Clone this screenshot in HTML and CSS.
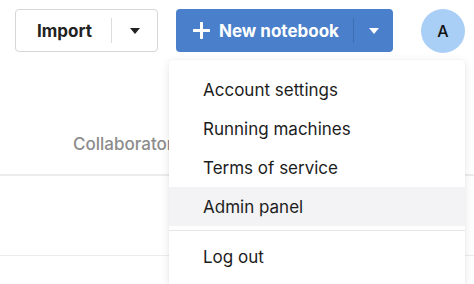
FILE: index.html
```html
<!DOCTYPE html>
<html>
<head>
<meta charset="utf-8">
<link rel="stylesheet" href="styles.css">
</head>
<body>
<div class="page">
  <header class="toolbar">
    <div class="btn btn-outline">
      <span class="btn-label">Import</span>
      <span class="btn-sep"></span>
      <span class="btn-caret"><svg width="10" height="6" viewBox="0 0 10 6"><path d="M0 0h10L5 6z" fill="#222"/></svg></span>
    </div>
    <div class="btn btn-primary">
      <svg class="plus" width="17" height="17" viewBox="0 0 17 17"><path d="M8.5 1v15M1 8.5h15" stroke="#fff" stroke-width="3" stroke-linecap="round"/></svg>
      <span class="btn-label">New notebook</span>
      <span class="btn-sep"></span>
      <span class="btn-caret"><svg width="10" height="6" viewBox="0 0 10 6"><path d="M0 0h10L5 6z" fill="#fff"/></svg></span>
    </div>
    <div class="avatar">A</div>
  </header>
  <section class="table">
    <div class="table-head">
      <span class="col-title">Collaborators</span>
    </div>
    <div class="table-row"></div>
  </section>
  <nav class="menu">
    <div class="menu-item">Account settings</div>
    <div class="menu-item">Running machines</div>
    <div class="menu-item">Terms of service</div>
    <div class="menu-item active">Admin panel</div>
    <div class="menu-divider"></div>
    <div class="menu-item">Log out</div>
  </nav>
</div>
</body>
</html>
```
FILE: styles.css
```css
* { box-sizing: border-box; }
html, body { margin: 0; padding: 0; background: #fff; }
body { font-family: Inter, "Liberation Sans", sans-serif; color: #1f1f1f; }
.page { position: relative; width: 474px; height: 284px; overflow: hidden; }

.toolbar {
  display: flex;
  align-items: center;
  padding: 9px 0 0 15px;
  height: 52px;
}
.btn {
  display: flex;
  align-items: center;
  height: 43px;
  border-radius: 4px;
}
.btn-outline {
  width: 143px;
  border: 1px solid #d6d6d6;
  padding-left: 21px;
  background: #fff;
}
.btn-outline .btn-label { font-weight: 700; font-size: 17px; color: #222; width: 74px; }
.btn-sep { width: 1px; height: 25px; background: #d4d4d4; }
.btn-outline .btn-sep { background: #dcdcdc; }
.btn-caret { flex: 1; display: flex; justify-content: center; align-items: center; }
.btn-caret svg { display: block; }

.btn-primary {
  margin-left: 18px;
  width: 217px;
  background: #4a7fcb;
  padding-left: 17px;
  color: #fff;
}
.plus { display: block; margin-right: 9px; }
.btn-primary .btn-label { font-weight: 700; font-size: 17px; width: 134px; }
.btn-primary .btn-sep { background: #3e6fb3; }

.avatar {
  margin-left: 28px;
  width: 44px;
  height: 44px;
  border-radius: 50%;
  background: #a9cff6;
  display: flex;
  align-items: center;
  justify-content: center;
  font-size: 16px;
  font-weight: 500;
  color: #111;
}

.table { margin-top: 72px; }
.table-head {
  height: 52px;
  border-bottom: 2px solid #ececec;
  padding-left: 73px;
  padding-top: 10px;
}
.col-title { font-size: 17px; font-weight: 500; color: #8c8c8c; white-space: nowrap; }
.table-row { height: 80px; border-bottom: 1px solid #ececec; }

.menu {
  position: absolute;
  left: 169px;
  top: 60px;
  width: 296px;
  background: #fff;
  border-radius: 4px;
  box-shadow: 0 2px 10px rgba(0,0,0,0.10), 0 0 2px rgba(0,0,0,0.06);
  padding-top: 10px;
  padding-bottom: 10px;
}
.menu-item {
  height: 39px;
  display: flex;
  align-items: center;
  padding-left: 34px;
  font-size: 17px;
  color: #1d1d1d;
}
.menu-item.active { background: #f3f3f5; }
.menu-divider { height: 1px; background: #e4e4e4; margin: 4px 0 6px; }
```
